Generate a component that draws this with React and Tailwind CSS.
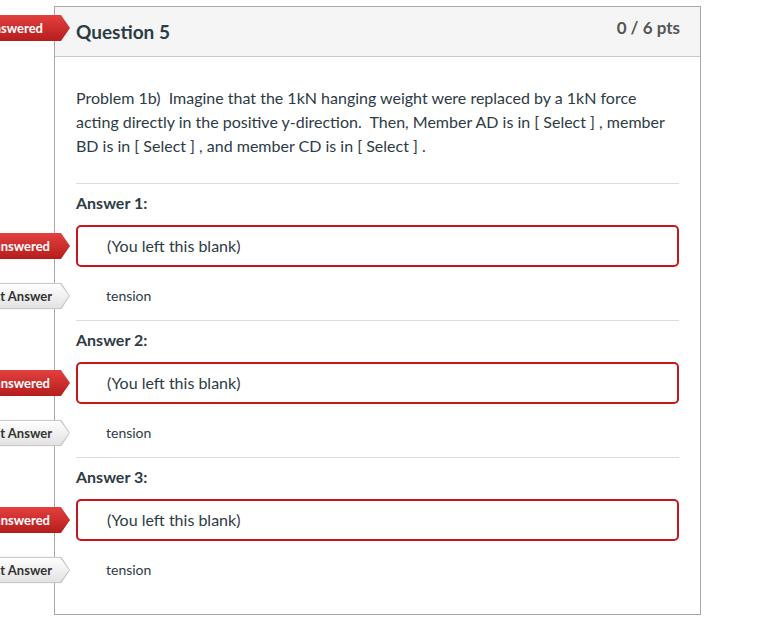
import React from "react";

const font = { fontFamily: "Lato, 'Noto Sans', sans-serif" };
const arrow =
  "[clip-path:polygon(0_0,calc(100%-9px)_0,100%_50%,calc(100%-9px)_100%,0_100%)]";

function RedTag({ className, pr = "pr-[20px]" }) {
  return (
    <div
      className={
        "absolute h-[26px] w-[110px] bg-gradient-to-b from-[#e3403f] to-[#b51c1c] flex items-center justify-end " +
        arrow +
        " " +
        className
      }
    >
      <span className={"text-[13px] font-bold text-white leading-none whitespace-nowrap " + pr}>Unanswered</span>
    </div>
  );
}

function GrayTag() {
  return (
    <div
      className={
        "absolute right-[calc(100%+6px)] top-1/2 -translate-y-1/2 h-[27px] w-[110px] bg-[#c4c4c4] " + arrow
      }
    >
      <div
        className={
          "absolute inset-[1px] bg-gradient-to-b from-[#ffffff] to-[#e2e2e2] flex items-center justify-end " + arrow
        }
      >
        <span className="text-[13px] font-bold text-[#333] leading-none pr-[17px] whitespace-nowrap">Correct Answer</span>
      </div>
    </div>
  );
}

function AnswerBlock({ label, last }) {
  return (
    <div className={"border-t border-[#dcdcdc] " + (last ? "pb-[32px]" : "pb-[12px]")}>
      <div className="mt-[9px] h-5 leading-5 text-[16px] font-bold text-[#2d3b45]">{label}</div>
      <div className="relative mt-[12px] h-[42px] border-2 border-[#c8161d] rounded-[5px] flex items-center pl-[29px] text-[16px] text-[#2d3b45]">
        <RedTag className="right-[calc(100%+8px)] top-1/2 -translate-y-1/2" />
        (You left this blank)
      </div>
      <div className="relative mt-[17px] h-6 leading-6 pl-[30px] text-[14px] text-[#2d3b45]">
        <GrayTag />
        tension
      </div>
    </div>
  );
}

export default function App() {
  return (
    <div className="w-[774px] h-[626px] bg-white overflow-hidden pl-[54px] pt-[6px]" style={font}>
      <div className="w-[647px] border border-[#a8a8a8] bg-white">
        <div className="relative h-[50px] bg-[#f5f5f5] border-b border-[#c7c7c7] flex items-center justify-between pl-[21px] pr-[20px]">
          <RedTag className="left-[-95px] top-[8px]" pr="pr-[27px]" />
          <div className="text-[19px] font-bold text-[#2d3b45] mt-[1px]">Question 5</div>
          <div className="text-[17px] font-bold text-[#555] self-start mt-[8px]">0 / 6 pts</div>
        </div>
        <div className="px-[21px] pt-[29px]">
          <p className="text-[16px] leading-6 text-[#2d3b45] pb-[25px]">
            Problem 1b)&nbsp; Imagine that the 1kN hanging weight were replaced by a 1kN force acting directly in the positive y-direction.&nbsp; Then, Member AD is in [ Select ] , member BD is in [ Select ] , and member CD is in [ Select ] .
          </p>
          <AnswerBlock label="Answer 1:" />
          <AnswerBlock label="Answer 2:" />
          <AnswerBlock label="Answer 3:" last />
        </div>
      </div>
    </div>
  );
}
